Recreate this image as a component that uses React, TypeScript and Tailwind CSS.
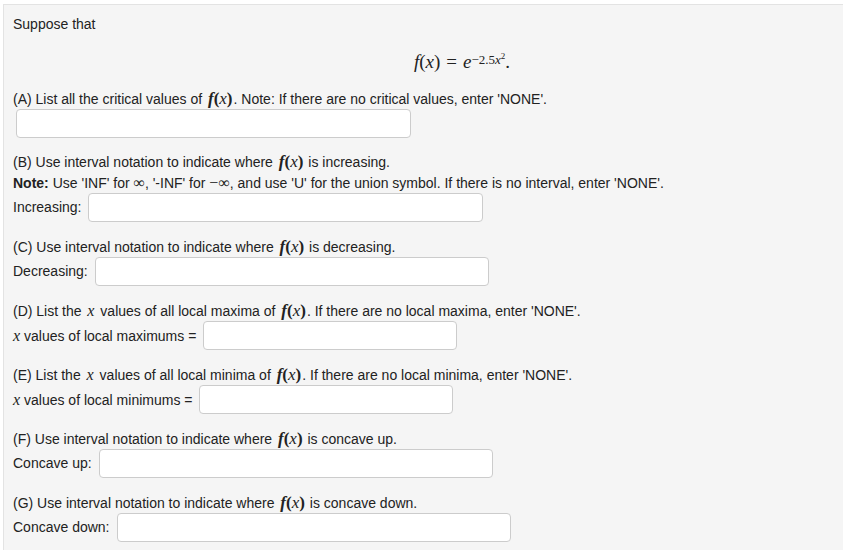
import React from 'react';

const mathFont = { fontFamily: '"Liberation Serif", "DejaVu Serif", serif' };

function Fx() {
  return (
    <span className="text-[17px] ml-[2px] mr-[1px]" style={mathFont}>
      <span className="italic font-bold">f</span>
      <span className="font-semibold">(</span>
      <span className="italic">x</span>
      <span className="font-semibold">)</span>
    </span>
  );
}

function X({ spaced = true }: { spaced?: boolean }) {
  return (
    <span className={`italic text-[16px] ${spaced ? 'mx-[2px]' : ''}`} style={mathFont}>
      x
    </span>
  );
}

function Field({ label, width }: { label: React.ReactNode; width: string }) {
  return (
    <div className="flex items-center mb-[10px] h-[29px]">
      {label && <span className="mr-[7px]">{label}</span>}
      <div className={`${width} h-[29px] bg-white border border-[#cccccc] rounded-[4px]`} />
    </div>
  );
}

function Line({ children, top = 'mt-[5px]' }: { children: React.ReactNode; top?: string }) {
  return <div className={`${top} h-[20px] leading-[20px] whitespace-nowrap`}>{children}</div>;
}

export default function App() {
  return (
    <div className="min-h-screen bg-white pl-[3px] pt-[4px]">
      <div
        className="flex flex-col min-h-[546px] bg-[#f5f5f5] border-t border-l border-[#e3e3e3] pl-[9px] pt-[4px] text-[14px] text-[#222]"
        style={{ fontFamily: '"Liberation Sans", Arial, sans-serif' }}
      >
        <Line>Suppose that</Line>

        <div className="h-[50px] flex items-center justify-center pl-[68px] pt-[6px]" style={mathFont}>
          <span className="text-[19px]">
            <span className="italic">f</span>(<span className="italic">x</span>)
            <span className="mx-[6px]">=</span>
            <span className="italic">e</span>
            <sup className="text-[13px] relative -top-[4px]">
              −2.5<span className="italic">x</span>
              <sup className="text-[9px]">2</sup>
            </sup>
            .
          </span>
        </div>

        <Line>
          (A) List all the critical values of <Fx />. Note: If there are no critical values, enter 'NONE'.
        </Line>
        <div className="pl-[3px]">
          <Field label={null} width="w-[395px]" />
        </div>

        <Line top="mt-[4px]">
          (B) Use interval notation to indicate where <Fx /> is increasing.
        </Line>
        <Line top="mt-[1px]">
          <span className="font-bold">Note:</span> Use 'INF' for{' '}
          <span className="text-[16px]" style={mathFont}>∞</span>, '-INF' for{' '}
          <span className="text-[16px]" style={mathFont}>−∞</span>, and use 'U' for the union symbol. If
          there is no interval, enter 'NONE'.
        </Line>
        <Field label="Increasing:" width="w-[395px]" />

        <Line>
          (C) Use interval notation to indicate where <Fx /> is decreasing.
        </Line>
        <Field label="Decreasing:" width="w-[394px]" />

        <Line>
          (D) List the <X /> values of all local maxima of <Fx />. If there are no local maxima, enter 'NONE'.
        </Line>
        <Field
          label={
            <>
              <X spaced={false} /> values of local maximums =
            </>
          }
          width="w-[254px]"
        />

        <Line>
          (E) List the <X /> values of all local minima of <Fx />. If there are no local minima, enter 'NONE'.
        </Line>
        <Field
          label={
            <>
              <X spaced={false} /> values of local minimums =
            </>
          }
          width="w-[254px]"
        />

        <Line>
          (F) Use interval notation to indicate where <Fx /> is concave up.
        </Line>
        <Field label="Concave up:" width="w-[394px]" />

        <Line>
          (G) Use interval notation to indicate where <Fx /> is concave down.
        </Line>
        <Field label="Concave down:" width="w-[394px]" />
      </div>
    </div>
  );
}
